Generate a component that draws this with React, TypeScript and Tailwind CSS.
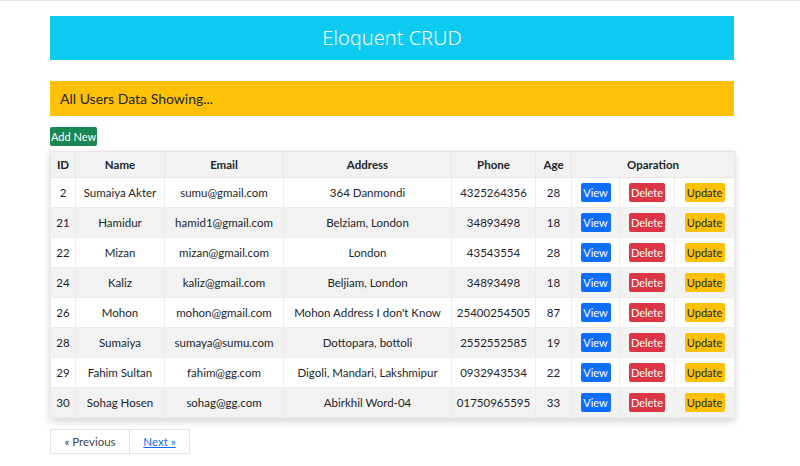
import React from 'react';

interface User {
  id: number;
  name: string;
  email: string;
  address: string;
  phone: string;
  age: number;
}

const users: User[] = [
  { id: 2, name: 'Sumaiya Akter', email: 'sumu@gmail.com', address: '364 Danmondi', phone: '4325264356', age: 28 },
  { id: 21, name: 'Hamidur', email: 'hamid1@gmail.com', address: 'Belziam, London', phone: '34893498', age: 18 },
  { id: 22, name: 'Mizan', email: 'mizan@gmail.com', address: 'London', phone: '43543554', age: 28 },
  { id: 24, name: 'Kaliz', email: 'kaliz@gmail.com', address: 'Beljiam, London', phone: '34893498', age: 18 },
  { id: 26, name: 'Mohon', email: 'mohon@gmail.com', address: "Mohon Address I don't Know", phone: '25400254505', age: 87 },
  { id: 28, name: 'Sumaiya', email: 'sumaya@sumu.com', address: 'Dottopara, bottoli', phone: '2552552585', age: 19 },
  { id: 29, name: 'Fahim Sultan', email: 'fahim@gg.com', address: 'Digoli, Mandari, Lakshmipur', phone: '0932943534', age: 22 },
  { id: 30, name: 'Sohag Hosen', email: 'sohag@gg.com', address: 'Abirkhil Word-04', phone: '01750965595', age: 33 },
];

export default function App() {
  return (
    <div
      className="min-h-[466px] bg-white border-t border-[#e3e3e3] text-[#212529]"
      style={{ fontFamily: 'Lato, "Noto Sans", sans-serif' }}
    >
      <div className="w-[684px] ml-[50px] pt-[15px]">
        {/* Title */}
        <div className="h-[44px] bg-[#0dcaf0] flex items-center justify-center">
          <h1 className="text-white text-[20px] font-light" style={{ fontFamily: '"Noto Sans", sans-serif' }}>
            Eloquent CRUD
          </h1>
        </div>

        {/* Info bar */}
        <div className="mt-[21px] h-[35px] bg-[#ffc107] flex items-center px-[10px]">
          <span className="text-[14px]">All Users Data Showing...</span>
        </div>

        {/* Add New */}
        <button className="mt-[11px] h-[19px] w-[47px] bg-[#198754] text-white text-[11px] rounded-[2px] leading-none block">
          Add New
        </button>

        {/* Table */}
        <table className="mt-[5px] w-[684px] table-fixed border-collapse text-[11.5px] shadow-[0_3px_8px_rgba(0,0,0,0.18)]">
          <colgroup>
            <col className="w-[25px]" />
            <col className="w-[89px]" />
            <col className="w-[119px]" />
            <col className="w-[168px]" />
            <col className="w-[84px]" />
            <col className="w-[36px]" />
            <col className="w-[48px]" />
            <col className="w-[55px]" />
            <col className="w-[60px]" />
          </colgroup>
          <thead>
            <tr className="h-[26px] bg-[#f2f2f2]">
              <th className="font-bold border border-[#e6e6e6] p-0">ID</th>
              <th className="font-bold border border-[#e6e6e6] p-0">Name</th>
              <th className="font-bold border border-[#e6e6e6] p-0">Email</th>
              <th className="font-bold border border-[#e6e6e6] p-0">Address</th>
              <th className="font-bold border border-[#e6e6e6] p-0">Phone</th>
              <th className="font-bold border border-[#e6e6e6] p-0">Age</th>
              <th colSpan={3} className="font-bold border border-[#e6e6e6] p-0">Oparation</th>
            </tr>
          </thead>
          <tbody>
            {users.map((u, i) => (
              <tr key={u.id} className={`h-[30px] text-center ${i % 2 === 1 ? 'bg-[#f2f2f2]' : 'bg-white'}`}>
                <td className="border border-[#ececec] p-0">{u.id}</td>
                <td className="border border-[#ececec] p-0">{u.name}</td>
                <td className="border border-[#ececec] p-0">{u.email}</td>
                <td className="border border-[#ececec] p-0">{u.address}</td>
                <td className="border border-[#ececec] p-0">{u.phone}</td>
                <td className="border border-[#ececec] p-0">{u.age}</td>
                <td className="border border-[#ececec] p-0">
                  <button className="h-[19px] w-[30px] bg-[#0d6efd] text-white text-[11px] rounded-[2px] leading-none align-middle">View</button>
                </td>
                <td className="border border-[#ececec] p-0">
                  <button className="h-[19px] w-[36px] bg-[#dc3545] text-white text-[11px] rounded-[2px] leading-none align-middle">Delete</button>
                </td>
                <td className="border border-[#ececec] p-0">
                  <button className="h-[19px] w-[40px] bg-[#ffc107] text-[#212529] text-[11px] rounded-[2px] leading-none align-middle">Update</button>
                </td>
              </tr>
            ))}
          </tbody>
        </table>

        {/* Pagination */}
        <div className="mt-[11px] flex text-[11.5px]">
          <span className="w-[80px] h-[25px] flex items-center justify-center border border-[#e3e3e3] text-[#444]">
            « Previous
          </span>
          <a href="#" className="w-[60px] h-[25px] flex items-center justify-center border border-l-0 border-[#e3e3e3] text-[#0d6efd] underline">
            Next »
          </a>
        </div>
      </div>
    </div>
  );
}
